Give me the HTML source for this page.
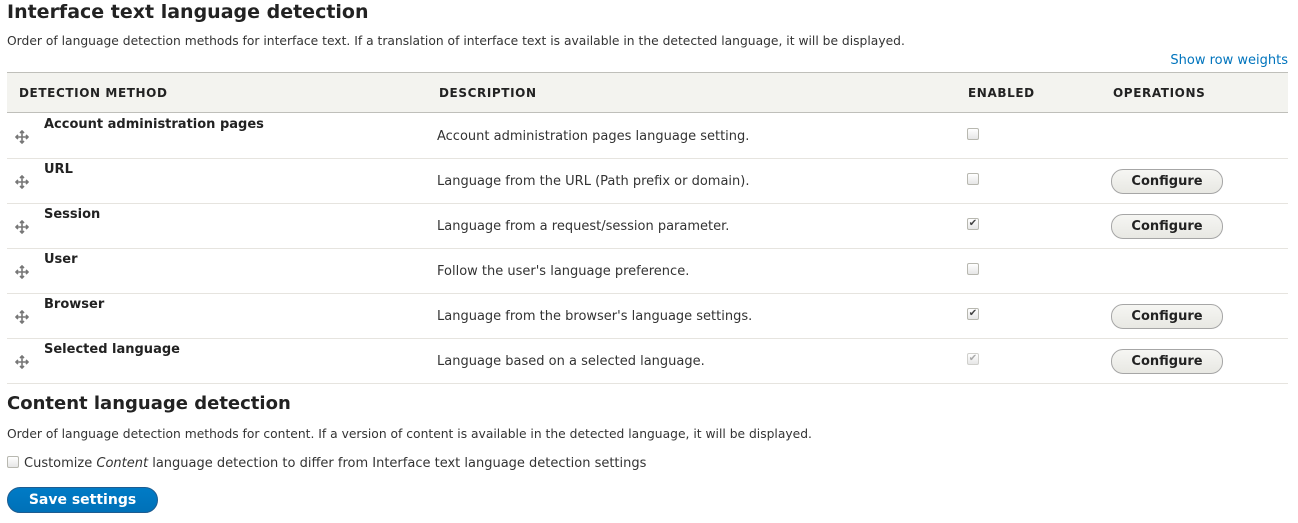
<!DOCTYPE html>
<html><head><style>
body{margin:0;background:#fff;font-family:"DejaVu Sans","Liberation Sans",sans-serif;color:#333;width:1298px;height:523px;overflow:hidden;position:relative}
.a{position:absolute;white-space:nowrap}
h2{margin:0;font-size:19px;font-weight:bold;color:#222}
.d{font-size:12.3px;color:#333}
.hd{position:absolute;left:7px;top:72px;width:1281px;height:39px;background:#f3f3ef;border-top:1px solid #bfbfba;border-bottom:1px solid #bfbfba}
.hd span{position:absolute;top:13px;font-size:12px;font-weight:bold;letter-spacing:.6px;color:#222}
.r{position:absolute;left:7px;width:1281px;height:44px;border-bottom:1px solid #e6e4df;font-size:13px}
.r>*{position:absolute;white-space:nowrap}
.nm{left:37px;top:3px;font-weight:bold;color:#222}
.mv{left:8px;top:16px}
.ds{left:430px;top:15px}
.cb{left:960px;top:14px;width:10px;height:10px;border:1px solid #b8b8b0;border-radius:2px;background:linear-gradient(#fff,#e6e6e6);font-size:10px;line-height:10px;text-align:center;color:#444}
.btn{left:1104px;top:10px;width:110px;height:23px;border:1px solid #a6a6a6;border-radius:12px;background:linear-gradient(#f6f6f3,#e8e8e3);font-weight:bold;font-size:13px;text-align:center;line-height:23px;color:#222}
</style></head><body>
<h2 class="a" style="left:7px;top:1px">Interface text language detection</h2>
<div class="a d" style="left:7px;top:34px">Order of language detection methods for interface text. If a translation of interface text is available in the detected language, it will be displayed.</div>
<div class="a" style="right:10px;top:53px;font-size:13px;color:#0074bd">Show row weights</div>
<div class="hd"><span style="left:12px">DETECTION METHOD</span><span style="left:432px">DESCRIPTION</span><span style="left:961px">ENABLED</span><span style="left:1106px">OPERATIONS</span></div>

<div class="r" style="top:114px"><svg class="mv" width="14" height="14" viewBox="0 0 14 14"><path d="M7 1v12M1 7h12M5 3l2-2 2 2M5 11l2 2 2-2M3 5L1 7l2 2M11 5l2 2-2 2" stroke="#777" stroke-width="1.6" fill="none"/></svg><span class="nm">Account administration pages</span><span class="ds">Account administration pages language setting.</span><span class="cb"></span></div>
<div class="r" style="top:159px"><svg class="mv" width="14" height="14" viewBox="0 0 14 14"><path d="M7 1v12M1 7h12M5 3l2-2 2 2M5 11l2 2 2-2M3 5L1 7l2 2M11 5l2 2-2 2" stroke="#777" stroke-width="1.6" fill="none"/></svg><span class="nm">URL</span><span class="ds">Language from the URL (Path prefix or domain).</span><span class="cb"></span><span class="btn">Configure</span></div>
<div class="r" style="top:204px"><svg class="mv" width="14" height="14" viewBox="0 0 14 14"><path d="M7 1v12M1 7h12M5 3l2-2 2 2M5 11l2 2 2-2M3 5L1 7l2 2M11 5l2 2-2 2" stroke="#777" stroke-width="1.6" fill="none"/></svg><span class="nm">Session</span><span class="ds">Language from a request/session parameter.</span><span class="cb">✔</span><span class="btn">Configure</span></div>
<div class="r" style="top:249px"><svg class="mv" width="14" height="14" viewBox="0 0 14 14"><path d="M7 1v12M1 7h12M5 3l2-2 2 2M5 11l2 2 2-2M3 5L1 7l2 2M11 5l2 2-2 2" stroke="#777" stroke-width="1.6" fill="none"/></svg><span class="nm">User</span><span class="ds">Follow the user's language preference.</span><span class="cb"></span></div>
<div class="r" style="top:294px"><svg class="mv" width="14" height="14" viewBox="0 0 14 14"><path d="M7 1v12M1 7h12M5 3l2-2 2 2M5 11l2 2 2-2M3 5L1 7l2 2M11 5l2 2-2 2" stroke="#777" stroke-width="1.6" fill="none"/></svg><span class="nm">Browser</span><span class="ds">Language from the browser's language settings.</span><span class="cb">✔</span><span class="btn">Configure</span></div>
<div class="r" style="top:339px"><svg class="mv" width="14" height="14" viewBox="0 0 14 14"><path d="M7 1v12M1 7h12M5 3l2-2 2 2M5 11l2 2 2-2M3 5L1 7l2 2M11 5l2 2-2 2" stroke="#777" stroke-width="1.6" fill="none"/></svg><span class="nm">Selected language</span><span class="ds">Language based on a selected language.</span><span class="cb" style="color:#aaa;border-color:#d0d0cc">✔</span><span class="btn">Configure</span></div>

<h2 class="a" style="left:7px;top:393px;font-size:18px">Content language detection</h2>
<div class="a d" style="left:7px;top:427px">Order of language detection methods for content. If a version of content is available in the detected language, it will be displayed.</div>
<span class="a" style="left:7px;top:456px;width:10px;height:10px;border:1px solid #b8b8b0;border-radius:2px;background:linear-gradient(#fff,#e6e6e6)"></span>
<div class="a" style="left:24px;top:456px;font-size:13px">Customize <i>Content</i> language detection to differ from Interface text language detection settings</div>
<div class="a" style="left:7px;top:487px;width:149px;height:24px;border:1px solid #1e5c90;border-radius:13px;background:linear-gradient(#007bc6,#0071b8);color:#fff;font-weight:bold;font-size:14px;text-align:center;line-height:24px">Save settings</div>
</body></html>
